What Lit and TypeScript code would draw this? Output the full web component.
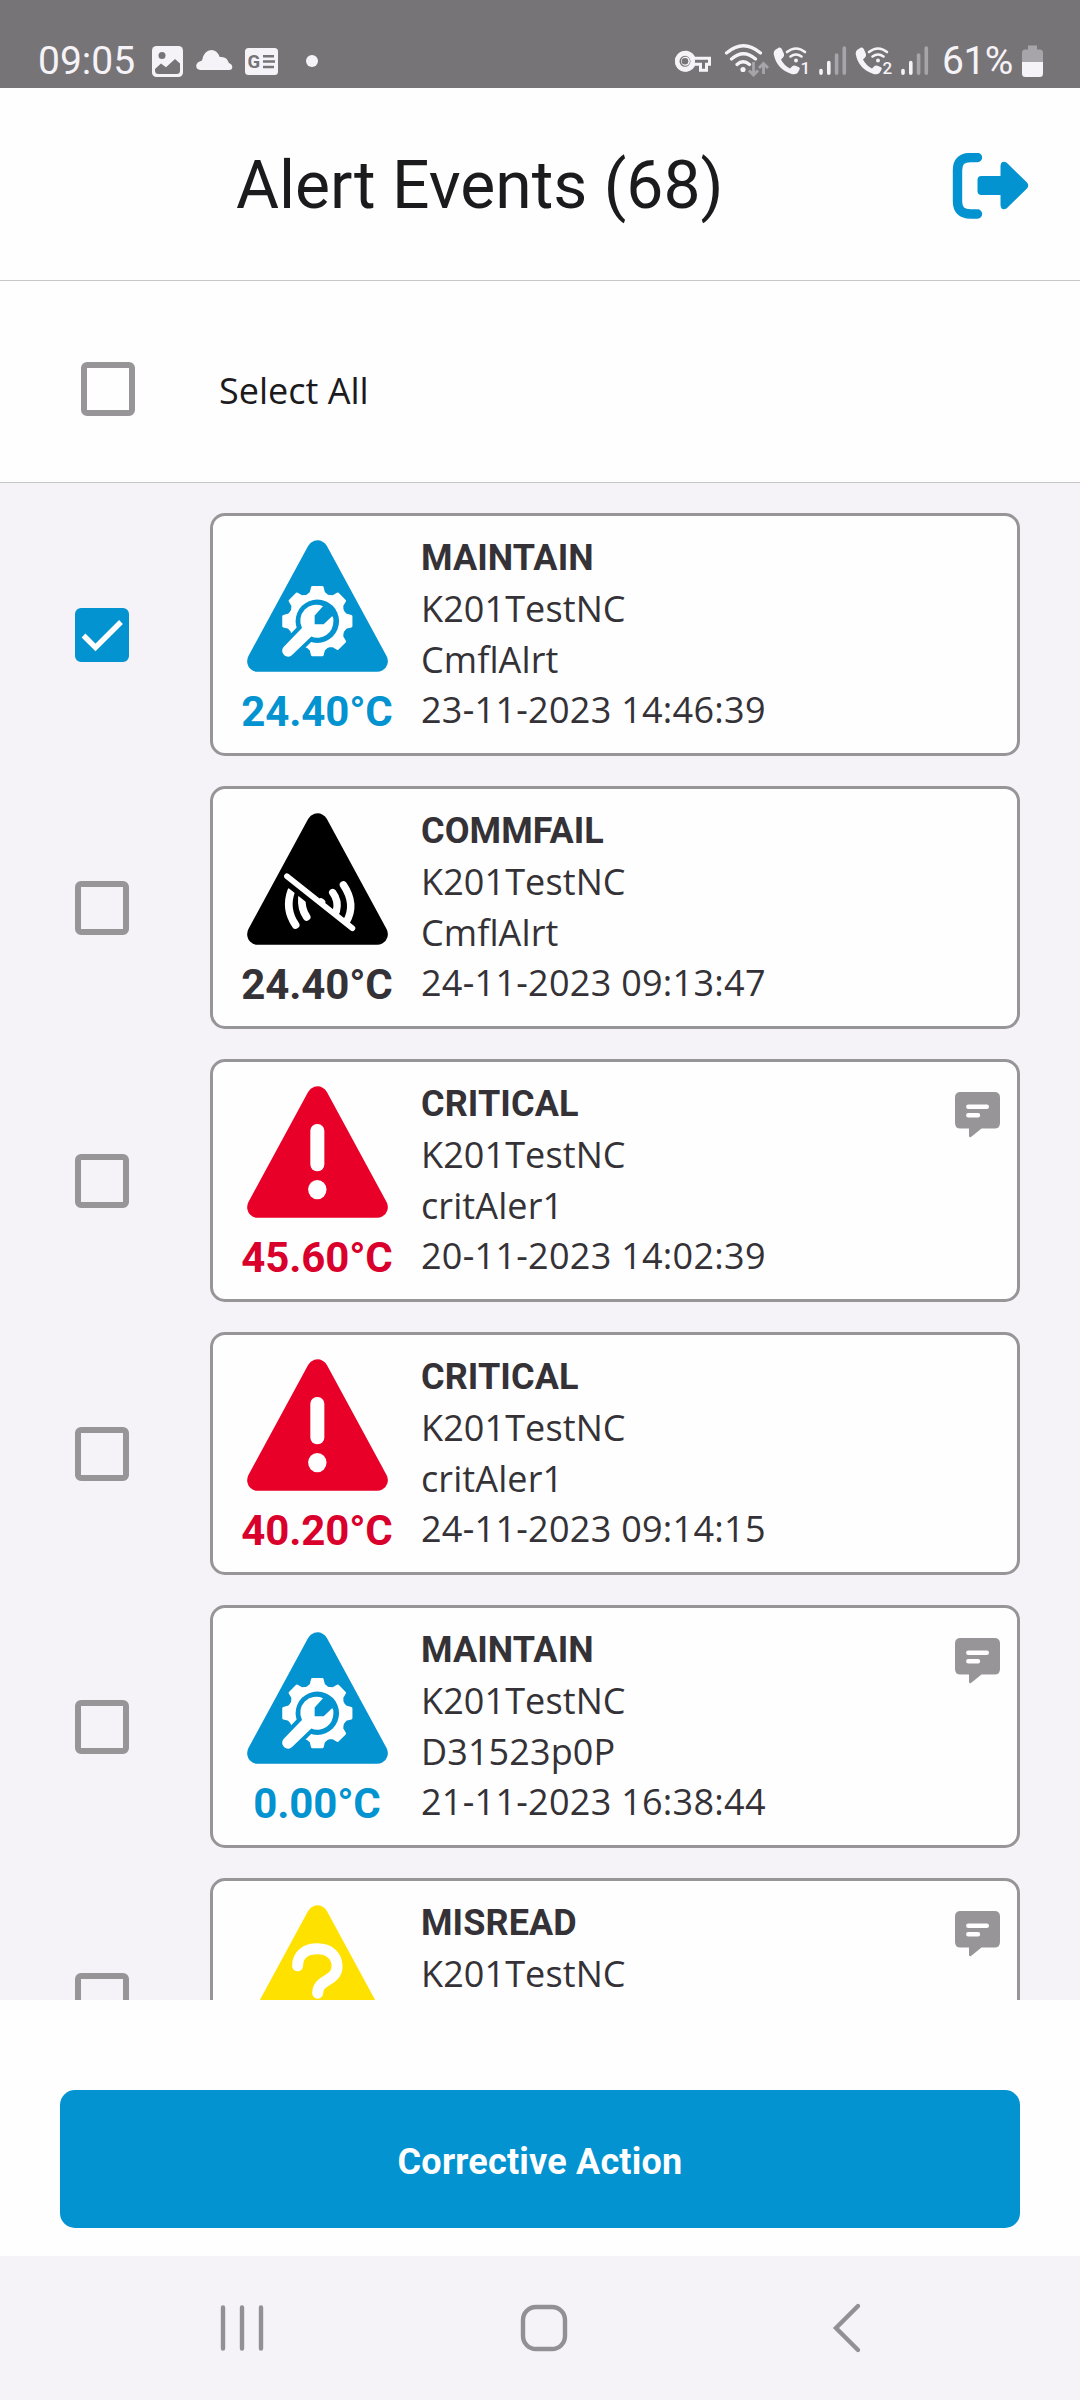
import { LitElement, html, css, svg, nothing } from "lit";
import { customElement, property } from "lit/decorators.js";

type Kind = "maintain" | "commfail" | "critical" | "misread";

interface AlertEvent {
  kind: Kind;
  temp: string;
  device: string;
  name: string;
  time: string;
  checked?: boolean;
  note?: boolean;
}

const EVENTS: AlertEvent[] = [
  { kind: "maintain", temp: "24.40°C", device: "K201TestNC", name: "CmflAlrt", time: "23-11-2023 14:46:39", checked: true },
  { kind: "commfail", temp: "24.40°C", device: "K201TestNC", name: "CmflAlrt", time: "24-11-2023 09:13:47" },
  { kind: "critical", temp: "45.60°C", device: "K201TestNC", name: "critAler1", time: "20-11-2023 14:02:39", note: true },
  { kind: "critical", temp: "40.20°C", device: "K201TestNC", name: "critAler1", time: "24-11-2023 09:14:15" },
  { kind: "maintain", temp: "0.00°C", device: "K201TestNC", name: "D31523p0P", time: "21-11-2023 16:38:44", note: true },
  { kind: "misread", temp: "", device: "K201TestNC", name: "", time: "", note: true },
];

const TEETH = [0, 45, 90, 135, 180, 225, 270, 315];

const GLYPHS = {
  maintain: svg`
    <g fill="#fff">
      <circle cx="210" cy="243" r="86"/>
      ${TEETH.map((a) => svg`<path transform="rotate(${a} 210 243)" stroke="#fff" stroke-width="8" stroke-linejoin="round" d="M184 164 L191 158 L195 142 H225 L229 158 L236 164Z"/>`)}
    </g>
    <circle cx="210" cy="243" r="65" fill="#0393d0"/>
    <path transform="translate(-141 -120)" fill="none" stroke="#0393d0" stroke-width="24" d="M333 408 L277 463 A17 17 0 0 1 250 440 L305 383"/>
    <path transform="translate(-141 -120)" fill="#fff" d="M368 318 L343 346 V372 H370 L395 348 Q400 350 399 364 A48 48 0 0 1 333 409 L277 463 A17 17 0 0 1 250 440 L305 383 A48 48 0 0 1 368 318Z"/>`,
  commfail: svg`
    <g transform="translate(-141 -99)" fill="none" stroke="#fff" stroke-linecap="round">
      <path stroke-width="23" d="M273 332 Q253 386 286 434"/>
      <path stroke-width="23" d="M305 352 Q302 385 319 410"/>
      <path stroke="#000" stroke-width="18" stroke-linecap="butt" d="M243 295 L440 452"/>
      <path stroke-width="22" d="M397 337 Q416 362 408 393"/>
      <path stroke-width="22" d="M429 314 Q468 372 438 424"/>
      <path stroke-width="17" d="M260 288 L456 444"/>
      <path stroke-width="18" d="M362 363 L366 366"/>
    </g>`,
  critical: svg`
    <rect x="189" y="114" width="42" height="141" rx="20" fill="#fff"/>
    <ellipse cx="210" cy="310" rx="27.5" ry="29" fill="#fff"/>`,
  misread: svg`
    <path transform="translate(-141 -135)" fill="none" stroke="#fff" stroke-width="33" stroke-linecap="round"
      d="M292 317 C292 283 318 266 351 266 C388 266 410 288 410 318 C410 365 352 355 352 399"/>
    <circle cx="210" cy="322" r="20" fill="#fff"/>`,
};

@customElement("check-box")
class CheckBox extends LitElement {
  @property({ type: Boolean }) checked = false;

  static styles = css`
    :host { display: block; flex: none; }
    .box {
      box-sizing: border-box;
      width: 54px;
      height: 54px;
      border: 6px solid #989599;
      border-radius: 6px;
    }
    .on { border-color: #0393d0; background: #0393d0; }
    .tick { display: block; width: 42px; height: 42px; }
  `;

  render() {
    return this.checked
      ? html`<div class="box on">
          <svg class="tick" viewBox="6 6 42 42"><path d="M8.5 27.500 L20.5 39.500 L46 14" fill="none" stroke="#fff" stroke-width="5.4"/></svg>
        </div>`
      : html`<div class="box"></div>`;
  }
}

@customElement("alert-row")
class AlertRow extends LitElement {
  @property({ attribute: false }) event!: AlertEvent;

  static styles = css`
    :host { display: flex; align-items: center; height: 243px; padding: 0 60px 0 75px; }
    .card {
      box-sizing: border-box;
      display: grid;
      grid-template-columns: 208px 1fr 46px;
      width: 810px;
      height: 243px;
      margin-left: 81px;
      border: 3px solid #989599;
      border-radius: 15px;
      background: #fefefe;
      color: #343236;
    }
    .status { display: flex; flex-direction: column; align-items: center; padding-top: 24px; }
    .triangle { display: block; width: 141px; height: 132px; }
    .temp { margin-top: 14px; font: 700 42px/51px Roboto, sans-serif; letter-spacing: -0.15px; white-space: nowrap; }
    .lines { padding-top: 17px; font: 400 36px/51px "Open Sans", sans-serif; letter-spacing: 0.1px; white-space: nowrap; }
    .kind { height: 50px; font-family: Roboto, sans-serif; font-weight: 700; }
    .time { line-height: 50px; letter-spacing: 0.27px; }
    .note { width: 46px; height: 46px; margin: 30px 0 0 -16px; }
    .maintain { color: #0393d0; }
    .commfail { color: #343236; }
    .commfail .triangle { color: #000; }
    .critical { color: #e90029; }
    .critical .temp { color: #d9002c; }
    .misread { color: #ffe100; }
  `;

  render() {
    const e = this.event;
    return html`
      <check-box ?checked=${e.checked}></check-box>
      <div class="card">
        <div class="status ${e.kind}">
          <svg class="triangle" viewBox="0 0 421 395">
            <path d="M210.5 33 L389 362.5 H32Z" fill="currentColor" stroke="currentColor" stroke-width="64" stroke-linejoin="round"/>
            ${GLYPHS[e.kind]}
          </svg>
          <div class="temp">${e.temp}</div>
        </div>
        <div class="lines">
          <div class="kind">${e.kind.toUpperCase()}</div>
          <div>${e.device}</div>
          <div>${e.name}</div>
          <div class="time">${e.time}</div>
        </div>
        ${e.note
          ? html`<svg class="note" viewBox="0 0 46 46">
              <path fill="#989599" d="M5.5 0 H39.5 Q45 0 45 5.500 V31 Q45 36.500 39.500 36.500 H26.500 L16 45 Q14 46 14 43.500 V36.500 H5.500 Q0 36.500 0 31 V5.500 Q0 0 5.500 0Z"/>
              <path stroke="#fefefe" stroke-width="4.400" stroke-linecap="round" d="M13.300 14.800 H31.800 M13.300 23.200 H23"/>
            </svg>`
          : nothing}
      </div>
    `;
  }
}

const wifiCall = (x: number, sim: string) => svg`
  <g transform="translate(${x} 0)">
    <path fill="#f5f3f7" d="M1.500 50 L5.500 47.500 Q7.500 47 8.300 49 L10.500 54 Q11 56 9.500 57.500 L7.500 59.500 Q10.500 65.500 16.500 68.500 L18.500 66.500 Q20 65 22 65.800 L25.500 67.200 Q27 68 25.800 70 L24 73 Q21.500 75 18 74 Q3 69 0.200 54 Q0 51.500 1.500 50Z"/>
    <path fill="none" stroke="#f5f3f7" stroke-width="2.600" stroke-linecap="round" d="M13.500 52 Q22.500 45 31.500 52 M17 56.500 Q22.500 52.500 28 56.500"/>
    <circle cx="22.500" cy="60.500" r="2" fill="#f5f3f7"/>
    <text x="27" y="74" fill="#f5f3f7" font-family="Roboto, sans-serif" font-weight="500" font-size="17">${sim}</text>
    <path stroke="#f5f3f7" stroke-width="3.600" stroke-linecap="round" d="M47.500 70.500 V73.200 M55.300 62.500 V73.200"/>
    <path stroke="#a7a5a9" stroke-width="3.600" stroke-linecap="round" d="M63.100 55 V73.200 M70.800 48 V73.200"/>
  </g>`;

@customElement("status-bar")
class StatusBar extends LitElement {
  static styles = css`
    :host {
      box-sizing: border-box;
      display: flex;
      height: 88px;
      padding: 40px 36px 0 38px;
      background: #777478;
      color: #f5f3f7;
      font: 400 39px/42px Roboto, sans-serif;
    }
    .time { width: 112px; }
    .icons { display: block; flex: none; height: 42px; }
    .left { width: 174px; }
    .right { width: 256px; margin-left: auto; }
    .percent { width: 79px; margin-left: 12px; letter-spacing: -0.5px; }
    .battery { width: 23px; }
  `;

  render() {
    return html`
      <div class="time">09:05</div>
      <svg class="icons left" viewBox="150 40 174 42" fill="#f5f3f7">
        <rect x="152" y="46" width="31" height="31" rx="4.500"/>
        <circle cx="162" cy="55.500" r="3.500" fill="#777478"/>
        <path fill="#777478" d="M155 69 L161 63.500 L166 67.300 L175 59 L180 63.500 V70.500 Q180 74 176.500 74 H158.500 Q155 74 155 70.500Z"/>
        <path d="M200.500 70 Q196 69.500 196.200 65.500 Q196.500 62 202 60.500 Q204 50 211.500 50 Q217 50 219.800 57 Q227 56 228.800 63 Q232.500 64 232.300 67.500 Q232 70 229 70Z"/>
        <rect x="245" y="48" width="33" height="27" rx="3.500"/>
        <text x="247.500" y="68" fill="#777478" font-family="Roboto, sans-serif" font-weight="700" font-size="18.500">G</text>
        <path stroke="#777478" stroke-width="2.600" d="M263 56.300 H274 M263 61.500 H275 M263 67 H274"/>
        <circle cx="312" cy="61" r="6"/>
      </svg>
      <svg class="icons right" viewBox="674 40 256 42">
        <path transform="translate(675 43.300) scale(1.500)" fill="#f5f3f7" d="M22 19h-6v-4h-2.680c-1.140 2.420-3.600 4-6.320 4-3.860 0-7-3.140-7-7s3.140-7 7-7c2.720 0 5.170 1.580 6.320 4H24v6h-2v4zm-4-2h2v-4h2v-2H11.940l-.23-.67C11.010 8.340 9.110 7 7 7c-2.760 0-5 2.240-5 5s2.240 5 5 5c2.110 0 4.010-1.340 4.710-3.330l.23-.67H18v4zM7 15c-1.650 0-3-1.350-3-3s1.350-3 3-3 3 1.350 3 3-1.350 3-3 3z"/>
        <circle cx="685" cy="61.300" r="7.800" fill="none" stroke="#f5f3f7" stroke-width="4.600"/>
        <circle cx="685" cy="61.300" r="3.300" fill="#777478"/>
        <path fill="none" stroke="#f5f3f7" stroke-width="3.200" stroke-linecap="round" d="M726.500 53 Q743.500 38.500 760.500 53 M731.500 59 Q743.500 48.500 755.500 59 M737 64.500 Q743 59 749.500 64.500"/>
        <circle cx="743" cy="69.500" r="2.600" fill="#f5f3f7"/>
        <path fill="none" stroke="#a7a5a9" stroke-width="2.800" d="M753.500 62 V75 M749 70.500 L753.500 75 L758 70.500 M763.500 74 V63 M759 68 L763.500 63.500 L768 68"/>
        ${wifiCall(773.5, "1")}
        ${wifiCall(855.5, "2")}
      </svg>
      <div class="percent">61%</div>
      <svg class="icons battery" viewBox="1020 40 23 42">
        <path fill="#a7a5a9" d="M1027 45.500 H1036 V49.500 H1039 Q1042 49.500 1042 53 V63 H1021 V53 Q1021 49.500 1024 49.500 H1027Z"/>
        <path fill="#f5f3f7" d="M1021 62 H1042 V73.500 Q1042 77 1038.500 77 H1024.500 Q1021 77 1021 73.500Z"/>
      </svg>
    `;
  }
}

@customElement("app-root")
class AppRoot extends LitElement {
  static styles = css`
    :host {
      display: flex;
      flex-direction: column;
      width: 1080px;
      height: 2400px;
      overflow: hidden;
      background: #fefefe;
    }
    status-bar { flex: none; }
    .header {
      box-sizing: border-box;
      display: flex;
      align-items: center;
      justify-content: space-between;
      flex: none;
      height: 193px;
      padding: 3px 51px 0 236px;
      border-bottom: 1px solid #c6c5c8;
    }
    .title { margin: 0; font: 400 66px/78px Roboto, sans-serif; color: #1b1a1d; }
    .exit { display: block; width: 77px; height: 66px; }
    .select-all {
      box-sizing: border-box;
      display: flex;
      align-items: center;
      flex: none;
      height: 202px;
      padding: 15px 81px 0;
      gap: 84px;
      border-bottom: 1px solid #c6c5c8;
    }
    .label { padding-top: 3px; font: 400 36px/50px "Open Sans", sans-serif; color: #1b1a1d; }
    .list {
      display: flex;
      flex-direction: column;
      flex: none;
      gap: 30px;
      box-sizing: border-box;
      height: 1517px;
      padding-top: 30px;
      overflow: hidden;
      background: #f5f3f7;
    }
    alert-row { flex: none; }
    .footer { flex: none; box-sizing: border-box; height: 256px; padding: 90px 60px 0; }
    .action {
      display: block;
      width: 100%;
      height: 138px;
      padding: 6px 0 0;
      border: 0;
      border-radius: 15px;
      background: #0393d0;
      color: #fefefe;
      font: 700 36px/42px Roboto, sans-serif;
      letter-spacing: 0.2px;
    }
    .nav { display: flex; flex: none; align-items: center; justify-content: space-between; height: 144px; padding: 0 217px; background: #f5f3f7; }
    .key { display: block; width: 50px; height: 52px; fill: none; stroke: #929094; stroke-width: 4.4; stroke-linecap: round; }
    .home { margin-left: 8px; }
  `;

  render() {
    return html`
      <status-bar></status-bar>
      <header class="header">
        <h1 class="title">Alert Events (68)</h1>
        <svg class="exit" viewBox="951.500 152 77 66">
          <path d="M977 156.500 H970 Q957 156.500 957 169 V200.500 Q957 213 970 213 H977" fill="none" stroke="#0393d0" stroke-width="9.400" stroke-linecap="round"/>
          <path fill="#0393d0" d="M981 175 H1000 V165 Q1000.500 159 1006 161.500 L1026.500 181.500 Q1029 184.500 1026.500 187.500 L1006 207.500 Q1000.500 210 1000 204 V194 H981 Q977 194 977 190 V179 Q977 175 981 175Z"/>
        </svg>
      </header>
      <div class="select-all">
        <check-box></check-box>
        <div class="label">Select All</div>
      </div>
      <main class="list">${EVENTS.map((e) => html`<alert-row .event=${e}></alert-row>`)}</main>
      <footer class="footer"><button class="action">Corrective Action</button></footer>
      <nav class="nav">
        <svg class="key" viewBox="217 2302 50 52"><path d="M223 2307.500 V2348.500 M242 2307.500 V2348.500 M261 2307.500 V2348.500"/></svg>
        <svg class="key home" viewBox="519 2302 50 52"><rect x="523" y="2307" width="42" height="42" rx="13"/></svg>
        <svg class="key" viewBox="813 2302 50 52"><path d="M858 2306 L836 2328 L858 2350"/></svg>
      </nav>
    `;
  }
}
